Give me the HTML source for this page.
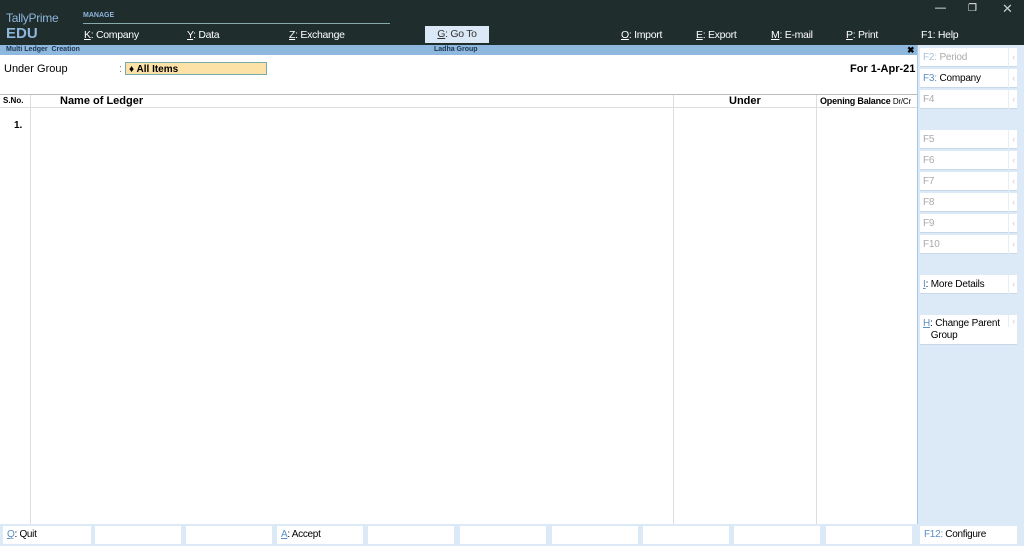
<!DOCTYPE html><html><head><style>
body{margin:0;width:1024px;height:546px;overflow:hidden;font-family:"Liberation Sans",sans-serif;background:#fff;position:relative}
.a{position:absolute}
.top{left:0;top:0;width:1024px;height:45px;background:#1f2d2d;color:#fff}
.m{font-size:10.5px;top:29px;color:#fff;letter-spacing:-0.3px}
.m u{text-decoration:underline}
.fb{position:absolute;left:920px;width:97px;height:19px;background:#fff;font-size:10px;color:#aaa;line-height:19px;padding-left:3px;box-sizing:border-box;border-bottom:1px solid #c8d8e8;letter-spacing:-0.2px}
.fb:after{content:"‹";position:absolute;right:2px;top:0;color:#ccc;font-size:9px;border-left:1px solid #e6eef6;padding-left:3px}
.bb{position:absolute;top:526px;height:18px;background:#fff;font-size:10px;line-height:18px;padding-left:4px;box-sizing:border-box;color:#000;letter-spacing:-0.3px}
.k{color:#5a8fc4}
</style></head><body>
<div class="a top">
<div class="a" style="left:6px;top:11px;font-size:12px;color:#8fb6dc;letter-spacing:-0.3px">TallyPrime</div>
<div class="a" style="left:6px;top:25px;font-size:15px;font-weight:bold;color:#8fb6dc">EDU</div>
<div class="a" style="left:83px;top:12px;font-size:7px;font-weight:bold;color:#8fb6dc">MANAGE</div>
<div class="a" style="left:83px;top:23px;width:307px;height:1px;background:#8aa"></div>
<div class="a m" style="left:84px"><u>K</u>: Company</div>
<div class="a m" style="left:187px"><u>Y</u>: Data</div>
<div class="a m" style="left:289px"><u>Z</u>: Exchange</div>
<div class="a" style="left:425px;top:26px;width:64px;height:17px;background:#dbe9f6;color:#333;font-size:10.5px;text-align:center;line-height:17px;letter-spacing:-0.3px"><u>G</u>: Go To</div>
<div class="a m" style="left:621px"><u>O</u>: Import</div>
<div class="a m" style="left:696px"><u>E</u>: Export</div>
<div class="a m" style="left:771px"><u>M</u>: E-mail</div>
<div class="a m" style="left:846px"><u>P</u>: Print</div>
<div class="a m" style="left:921px">F1: Help</div>
<div class="a" style="left:935px;top:2px;font-size:11px">—</div>
<div class="a" style="left:968px;top:3px;font-size:10px">❐</div>
<div class="a" style="left:1002px;top:1px;font-size:13px;color:#ccc">✕</div>
</div>
<div class="a" style="left:0;top:45px;width:917px;height:10px;background:#8fb8de;font-size:7px;font-weight:bold;line-height:10px;color:#1d3550">
<span class="a" style="left:6px">Multi Ledger&nbsp; Creation</span><span class="a" style="left:434px">Ladha Group</span><span class="a" style="left:907px;font-size:9px;color:#000">✖</span></div>
<div class="a" style="left:917px;top:45px;width:107px;height:480px;background:#dceaf7;border-left:1px solid #a9c7e4"></div>
<div class="a" style="left:4px;top:63px;font-size:11px">Under Group</div>
<div class="a" style="left:119px;top:63px;font-size:11px;color:#888">:</div>
<div class="a" style="left:125px;top:62px;width:142px;height:13px;background:#fde2a8;border:1px solid #7aa;font-size:10px;font-weight:bold;line-height:13px;padding-left:3px;box-sizing:border-box">♦ All Items</div>
<div class="a" style="left:850px;top:63px;font-size:11px;font-weight:bold">For 1-Apr-21</div>
<div class="a" style="left:0;top:94px;width:917px;height:1px;background:#bbb"></div>
<div class="a" style="left:0;top:107px;width:917px;height:1px;background:#ddd"></div>
<div class="a" style="left:30px;top:95px;width:1px;height:429px;background:#ddd"></div>
<div class="a" style="left:673px;top:95px;width:1px;height:429px;background:#ddd"></div>
<div class="a" style="left:816px;top:95px;width:1px;height:429px;background:#ddd"></div>
<div class="a" style="left:3px;top:96px;font-size:8px;font-weight:bold">S.No.</div>
<div class="a" style="left:60px;top:95px;font-size:11px;font-weight:bold">Name of Ledger</div>
<div class="a" style="left:729px;top:95px;font-size:11px;font-weight:bold">Under</div>
<div class="a" style="left:820px;top:96px;font-size:9px;font-weight:bold;letter-spacing:-0.2px">Opening Balance <span style="font-weight:normal;font-size:8px">Dr/Cr</span></div>
<div class="a" style="left:14px;top:120px;font-size:10px;font-weight:bold">1.</div>
<div class="fb" style="top:48px"><span style="color:#aac3dd">F2:</span> Period</div>
<div class="fb" style="top:69px;color:#000"><span class="k">F3:</span> Company</div>
<div class="fb" style="top:90px">F4</div>
<div class="fb" style="top:130px">F5</div>
<div class="fb" style="top:151px">F6</div>
<div class="fb" style="top:172px">F7</div>
<div class="fb" style="top:193px">F8</div>
<div class="fb" style="top:214px">F9</div>
<div class="fb" style="top:235px">F10</div>
<div class="fb" style="top:275px;color:#000"><u class="k">I</u>: More Details</div>
<div class="fb" style="top:315px;height:30px;line-height:12px;padding-top:3px;color:#000"><u class="k">H</u>: Change Parent<br>&nbsp;&nbsp;&nbsp;Group</div>
<div class="a" style="left:0;top:524px;width:1024px;height:22px;background:#dceaf7"></div>
<div class="bb" style="left:3px;width:88px"><u class="k">Q</u>: Quit</div>
<div class="bb" style="left:95px;width:86px"></div>
<div class="bb" style="left:186px;width:86px"></div>
<div class="bb" style="left:277px;width:86px"><u class="k">A</u>: Accept</div>
<div class="bb" style="left:368px;width:86px"></div>
<div class="bb" style="left:460px;width:86px"></div>
<div class="bb" style="left:552px;width:86px"></div>
<div class="bb" style="left:643px;width:86px"></div>
<div class="bb" style="left:734px;width:86px"></div>
<div class="bb" style="left:826px;width:86px"></div>
<div class="bb" style="left:920px;width:97px"><span class="k">F12:</span> Configure</div>
</body></html>
